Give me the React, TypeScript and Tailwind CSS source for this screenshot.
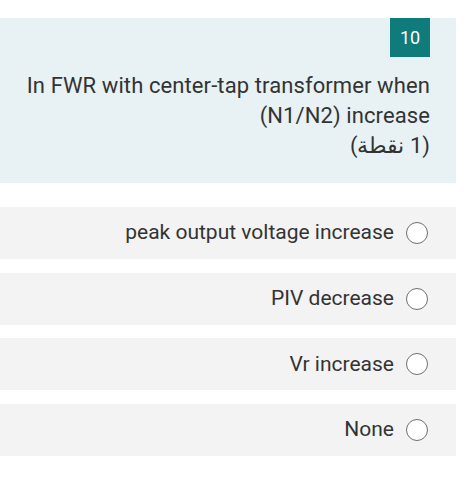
const options = ['peak output voltage increase', 'PIV decrease', 'Vr increase', 'None'];

export default function App() {
  return (
    <div className="w-[475px] h-[500px] bg-white pt-[18px] text-[#333333]" style={{ fontFamily: 'Roboto, "Noto Sans", sans-serif' }}>
      <div className="w-[456px] bg-[#e8f1f4] pr-[26px] pb-[22px] flex flex-col items-end">
        <div className="w-[40px] h-[39px] bg-[#0f7b7b] text-white text-[18px] flex items-center justify-center">
          10
        </div>
        <div className="mt-[14px] text-right text-[22px] leading-[30px] pl-[20px] tracking-[0.1px]">
          <p>In FWR with center-tap transformer when (N1/N2) increase</p>
          <p dir="rtl">(1 نقطة)</p>
        </div>
      </div>

      <div className="mt-[24px] w-[456px] flex flex-col gap-[13.7px]">
        {options.map((o) => (
          <label key={o} className="h-[52px] bg-[#f3f3f3] flex items-center justify-end pr-[28px] gap-[12px] text-[21px]">
            <span>{o}</span>
            <span className="w-[22px] h-[22px] rounded-full border-[1.5px] border-[#6f6f6f] bg-white" />
          </label>
        ))}
      </div>
    </div>
  );
}
